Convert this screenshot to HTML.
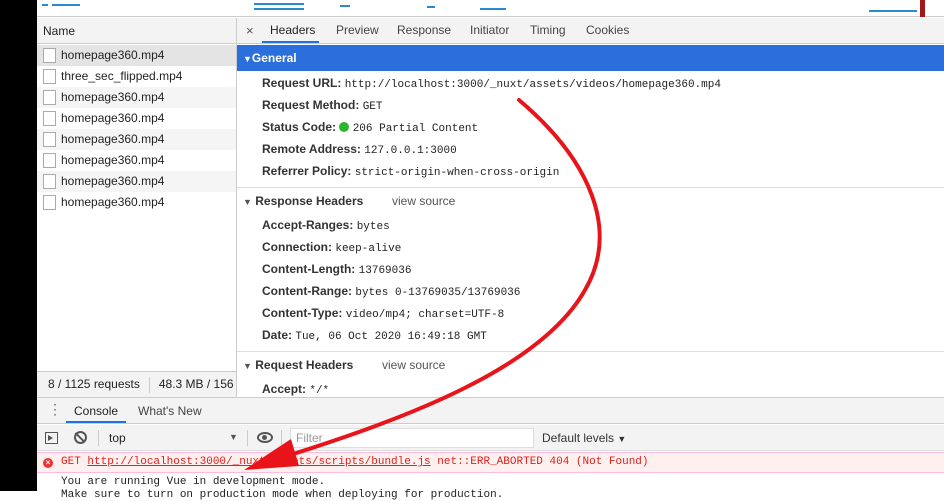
<!DOCTYPE html>
<html><head><style>
*{margin:0;padding:0;box-sizing:border-box}
body{width:944px;height:491px;overflow:hidden;background:#fff;font-family:"Liberation Sans",sans-serif;font-size:12px;color:#222;position:relative}
.abs{position:absolute}
.mono{font-family:"Liberation Mono",monospace;font-size:11px}
.row{position:absolute;left:37px;width:199px;height:21px;line-height:21px;padding-left:24px;font-size:12px}
.row i{position:absolute;left:6px;top:3px;width:13px;height:15px;border:1px solid #aaa;background:#fff}
.kv{position:absolute;left:262px;font-size:12px;white-space:nowrap}
.kv b{color:#333}
.sec{position:absolute;left:237px;width:707px;height:26px;line-height:26px;padding-left:6px;border-top:1px solid #ddd;font-weight:bold;color:#333}
.sec span{font-weight:normal;color:#555;position:absolute}
</style></head><body>
<div class="abs" style="left:0;top:0;width:37px;height:491px;background:#000"></div>
<div class="abs" style="left:37px;top:0;width:907px;height:17px;background:#fff;border-bottom:1px solid #ccc"></div>
<div class="abs" style="left:42px;top:4px;width:6px;height:2px;background:#2a8ad0"></div>
<div class="abs" style="left:52px;top:4px;width:28px;height:2px;background:#2a8ad0"></div>
<div class="abs" style="left:254px;top:3px;width:50px;height:2px;background:#2a8ad0"></div>
<div class="abs" style="left:254px;top:8px;width:50px;height:2px;background:#2a8ad0"></div>
<div class="abs" style="left:340px;top:5px;width:10px;height:2px;background:#2a8ad0"></div>
<div class="abs" style="left:427px;top:6px;width:8px;height:2px;background:#2a8ad0"></div>
<div class="abs" style="left:480px;top:8px;width:26px;height:2px;background:#2a8ad0"></div>
<div class="abs" style="left:869px;top:10px;width:48px;height:2px;background:#2a8ad0"></div>
<div class="abs" style="left:920px;top:0;width:5px;height:17px;background:#a01818"></div>
<div class="abs" style="left:37px;top:18px;width:199px;height:26px;background:#f3f3f3;border-bottom:1px solid #ccc;line-height:26px;padding-left:6px">Name</div>
<div class="abs" style="left:236px;top:18px;width:1px;height:379px;background:#ccc"></div>
<div class="row" style="top:45px;background:#e4e4e4"><i></i>homepage360.mp4</div>
<div class="row" style="top:66px"><i></i>three_sec_flipped.mp4</div>
<div class="row" style="top:87px;background:#f5f5f5"><i></i>homepage360.mp4</div>
<div class="row" style="top:108px"><i></i>homepage360.mp4</div>
<div class="row" style="top:129px;background:#f5f5f5"><i></i>homepage360.mp4</div>
<div class="row" style="top:150px"><i></i>homepage360.mp4</div>
<div class="row" style="top:171px;background:#f5f5f5"><i></i>homepage360.mp4</div>
<div class="row" style="top:192px"><i></i>homepage360.mp4</div>
<div class="abs" style="left:37px;top:371px;width:199px;height:26px;background:#f3f3f3;border-top:1px solid #ccc;line-height:24px;padding-left:11px;white-space:nowrap;overflow:hidden">8 / 1125 requests<span style="display:inline-block;width:1px;height:16px;background:#ccc;vertical-align:middle;margin:0 9px"></span>48.3 MB / 156</div>
<div class="abs" style="left:237px;top:18px;width:707px;height:26px;background:#f3f3f3;border-bottom:1px solid #ccc"></div>
<div class="abs" style="left:246px;top:23px;font-size:13px;color:#555">×</div>
<div class="abs" style="left:270px;top:23px">Headers</div>
<div class="abs" style="left:262px;top:41px;width:57px;height:2px;background:#1a73e8"></div>
<div class="abs" style="left:336px;top:23px;color:#444">Preview</div>
<div class="abs" style="left:397px;top:23px;color:#444">Response</div>
<div class="abs" style="left:470px;top:23px;color:#444">Initiator</div>
<div class="abs" style="left:530px;top:23px;color:#444">Timing</div>
<div class="abs" style="left:586px;top:23px;color:#444">Cookies</div>
<div class="abs" style="left:237px;top:45px;width:707px;height:26px;background:#2a6fdb;color:#fff;font-weight:bold;line-height:26px;padding-left:6px"><span style="font-size:9px">▼</span>General</div>
<div class="kv" style="top:76px"><b>Request URL:</b> <span class="mono">http://localhost:3000/_nuxt/assets/videos/homepage360.mp4</span></div>
<div class="kv" style="top:98px"><b>Request Method:</b> <span class="mono">GET</span></div>
<div class="kv" style="top:120px"><b>Status Code:</b> <span style="display:inline-block;width:10px;height:10px;border-radius:50%;background:#2bb52b;vertical-align:-1px"></span> <span class="mono">206 Partial Content</span></div>
<div class="kv" style="top:142px"><b>Remote Address:</b> <span class="mono">127.0.0.1:3000</span></div>
<div class="kv" style="top:164px"><b>Referrer Policy:</b> <span class="mono">strict-origin-when-cross-origin</span></div>
<div class="sec" style="top:187px"><span style="font-size:9px;position:static;color:#555">▼</span> Response Headers<span style="left:155px">view source</span></div>
<div class="kv" style="top:218px"><b>Accept-Ranges:</b> <span class="mono">bytes</span></div>
<div class="kv" style="top:240px"><b>Connection:</b> <span class="mono">keep-alive</span></div>
<div class="kv" style="top:262px"><b>Content-Length:</b> <span class="mono">13769036</span></div>
<div class="kv" style="top:284px"><b>Content-Range:</b> <span class="mono">bytes 0-13769035/13769036</span></div>
<div class="kv" style="top:306px"><b>Content-Type:</b> <span class="mono">video/mp4; charset=UTF-8</span></div>
<div class="kv" style="top:328px"><b>Date:</b> <span class="mono">Tue, 06 Oct 2020 16:49:18 GMT</span></div>
<div class="sec" style="top:351px"><span style="font-size:9px;position:static;color:#555">▼</span> Request Headers<span style="left:145px">view source</span></div>
<div class="kv" style="top:382px"><b>Accept:</b> <span class="mono">*/*</span></div>
<div class="abs" style="left:37px;top:397px;width:907px;height:27px;background:#f3f3f3;border-top:1px solid #ccc;border-bottom:1px solid #ccc"></div>
<div class="abs" style="left:48px;top:401px;font-size:14px;color:#666">⋮</div>
<div class="abs" style="left:74px;top:404px">Console</div>
<div class="abs" style="left:66px;top:421px;width:60px;height:2px;background:#1a73e8"></div>
<div class="abs" style="left:138px;top:404px;color:#444">What's New</div>
<div class="abs" style="left:37px;top:425px;width:907px;height:26px;background:#f3f3f3;border-bottom:1px solid #ddd"></div>
<div class="abs" style="left:45px;top:432px;width:13px;height:12px;border:1px solid #555"></div>
<div class="abs" style="left:48px;top:435px;width:0;height:0;border-left:5px solid #555;border-top:3px solid transparent;border-bottom:3px solid transparent"></div>
<div class="abs" style="left:74px;top:431px;width:13px;height:13px;border:2px solid #555;border-radius:50%"></div>
<div class="abs" style="left:79px;top:431px;width:2px;height:13px;background:#555;transform:rotate(-45deg)"></div>
<div class="abs" style="left:98px;top:430px;width:1px;height:16px;background:#ccc"></div>
<div class="abs" style="left:109px;top:431px">top</div>
<div class="abs" style="left:229px;top:432px;font-size:9px;color:#555">▼</div>
<div class="abs" style="left:247px;top:430px;width:1px;height:16px;background:#ccc"></div>
<div class="abs" style="left:257px;top:432px;width:16px;height:11px;border:2px solid #555;border-radius:50%"></div>
<div class="abs" style="left:262px;top:435px;width:5px;height:5px;background:#555;border-radius:50%"></div>
<div class="abs" style="left:281px;top:430px;width:1px;height:16px;background:#ccc"></div>
<div class="abs" style="left:290px;top:428px;width:244px;height:20px;background:#fff;border:1px solid #ddd;padding-left:5px;line-height:18px;color:#999">Filter</div>
<div class="abs" style="left:542px;top:431px;color:#333">Default levels <span style="font-size:9px">▼</span></div>
<div class="abs" style="left:37px;top:452px;width:907px;height:21px;background:#fff0f0;border-top:1px solid #fbd;border-bottom:1px solid #fbd"></div>
<div class="abs" style="left:43px;top:458px;width:10px;height:10px;border-radius:50%;background:#e33;color:#fff;font-size:8px;line-height:10px;text-align:center;font-weight:bold">×</div>
<div class="abs mono" style="left:61px;top:456px;color:#e0201c">GET <u>http://localhost:3000/_nuxt/assets/scripts/bundle.js</u> net::ERR_ABORTED 404 (Not Found)</div>
<div class="abs mono" style="left:61px;top:476px;color:#222">You are running Vue in development mode.</div>
<div class="abs mono" style="left:61px;top:489px;color:#222">Make sure to turn on production mode when deploying for production.</div>
<svg class="abs" style="left:0;top:0" width="944" height="491">
<path d="M519,100 C590,160 620,230 585,290 C540,370 400,420 290,455" fill="none" stroke="#e8141a" stroke-width="4" stroke-linecap="round"/>
<polygon points="244,470 291,439 299,466" fill="#e8141a"/>
</svg>
</body></html>
